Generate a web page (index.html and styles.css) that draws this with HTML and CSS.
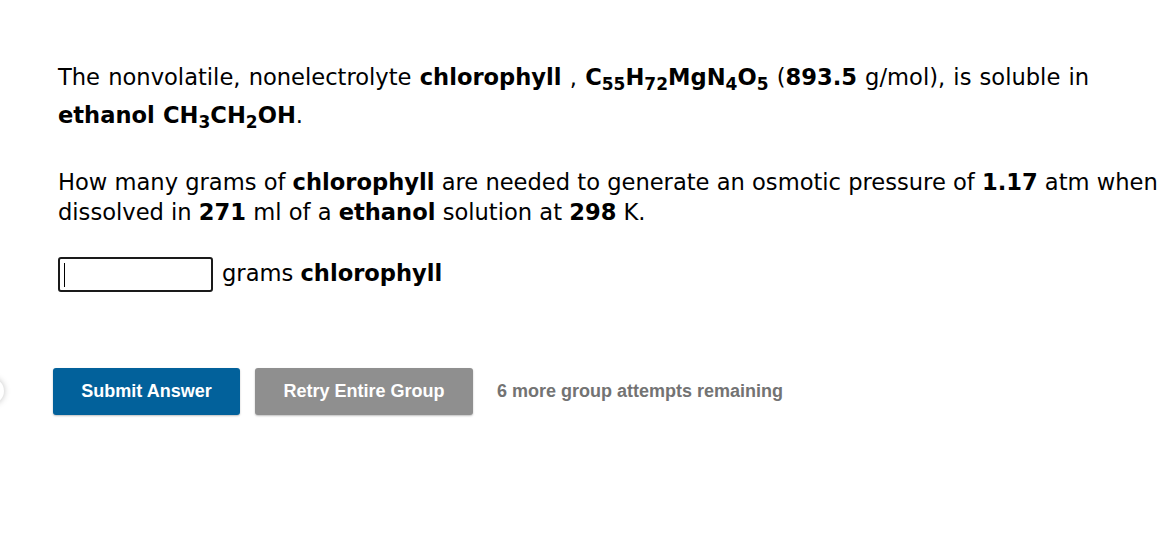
FILE: index.html
```html
<!DOCTYPE html>
<html>
<head>
<meta charset="utf-8">
<link rel="stylesheet" href="styles.css">
</head>
<body>
<div class="edge-shadow"></div>
<div class="question">
  <p class="intro">The nonvolatile, nonelectrolyte <b>chlorophyll</b> , <b>C<sub>55</sub>H<sub>72</sub>MgN<sub>4</sub>O<sub>5</sub></b> (<b>893.5</b> g/mol), is soluble in <b>ethanol</b> <b>CH<sub>3</sub>CH<sub>2</sub>OH</b>.</p>
  <p class="ask">How many grams of <b>chlorophyll</b> are needed to generate an osmotic pressure of <b>1.17</b> atm when dissolved in <b>271</b> ml of a <b>ethanol</b> solution at <b>298</b> K.</p>
  <div class="answer-row">
    <span class="answer-box"><span class="caret"></span></span>
    <span class="unit">grams <b>chlorophyll</b></span>
  </div>
</div>
<div class="actions">
  <button class="btn btn-submit">Submit Answer</button>
  <button class="btn btn-retry">Retry Entire Group</button>
  <span class="remaining">6 more group attempts remaining</span>
</div>
</body>
</html>
```
FILE: styles.css
```css
html, body {
  margin: 0;
  padding: 0;
  background: #fff;
}
body {
  position: relative;
  width: 1174px;
  height: 548px;
  overflow: hidden;
}
.edge-shadow {
  position: absolute;
  left: -22px;
  top: 378px;
  width: 26px;
  height: 26px;
  border-radius: 50%;
  box-shadow: 0 0 6px rgba(0,0,0,0.25);
  background: #fff;
}
.question {
  padding: 58px 0 0 58px;
  font-family: "DejaVu Sans", Verdana, sans-serif;
  font-size: 22.6px;
  color: #000;
}
.question p {
  margin: 0;
}
.intro {
  line-height: 38px;
  width: 1102px;
  word-spacing: 1px;
}
.intro sub {
  font-size: 17px;
  vertical-align: -5px;
  line-height: 0;
}
.ask {
  margin-top: 33px !important;
  line-height: 30px;
  width: 1110px;
}
.answer-row {
  margin-top: 30px;
  display: flex;
  align-items: center;
  gap: 9px;
}
.answer-box {
  display: block;
  box-sizing: border-box;
  width: 155px;
  height: 35px;
  border: 2px solid #1a1a1a;
  border-radius: 3px;
  position: relative;
}
.caret {
  position: absolute;
  left: 4px;
  top: 4px;
  width: 1px;
  height: 24px;
  background: #000;
}
.unit {
  margin-top: -4px;
}
.actions {
  margin: 76px 0 0 53px;
  display: flex;
  align-items: center;
  gap: 15px;
  font-family: "Liberation Sans", Arial, sans-serif;
}
.btn {
  border: none;
  border-radius: 3px;
  height: 47px;
  color: #fff;
  font-family: "Liberation Sans", Arial, sans-serif;
  font-weight: bold;
  font-size: 18px;
  padding: 0;
  box-shadow: 0 1px 2px rgba(0,0,0,0.25);
}
.btn-submit {
  background: #02619b;
  width: 187px;
}
.btn-retry {
  background: #8f8f8f;
  width: 218px;
}
.remaining {
  margin-left: 9px;
  color: #737373;
  font-weight: bold;
  font-size: 18px;
}
```
